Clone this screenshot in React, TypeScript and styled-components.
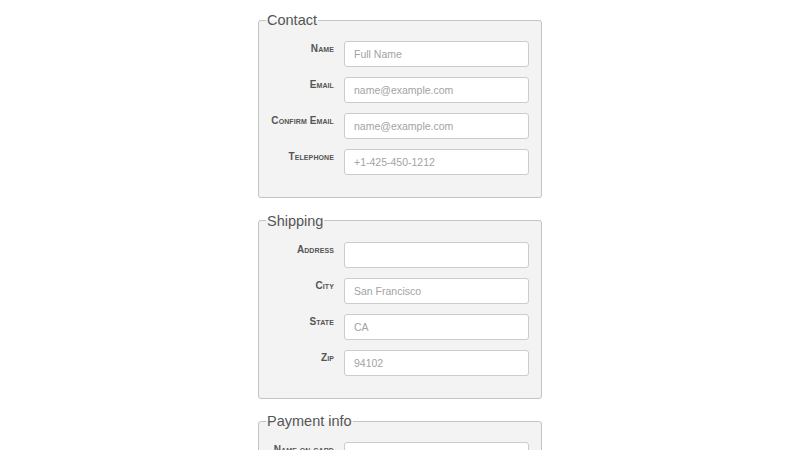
import React from 'react';
import styled, { createGlobalStyle } from 'styled-components';

const GlobalStyle = createGlobalStyle`
  html, body {
    margin: 0;
    padding: 0;
    background: #fff;
  }
  body {
    font-family: 'Liberation Sans', Arial, sans-serif;
  }
`;

const Page = styled.form`
  width: 284px;
  margin: 0 auto;
  padding-top: 11px;
`;

const Fieldset = styled.fieldset`
  margin: 0 0 13.5px;
  padding: 12px 12px 22px 7px;
  border: 1px solid #c4c4c4;
  border-radius: 3px;
  background: #f3f3f3;
  min-width: 0;
`;

const Legend = styled.legend`
  padding: 0 1px;
  font-size: 14.5px;
  line-height: 18px;
  color: #555;
`;

const Rows = styled.div`
  display: grid;
  grid-template-columns: 64px 185px;
  column-gap: 10px;
  row-gap: 10px;
  padding-left: 4px;
`;

const Label = styled.label`
  justify-self: end;
  padding-top: 2px;
  font-size: 10px;
  line-height: 12px;
  font-weight: bold;
  font-variant: small-caps;
  letter-spacing: 0.01em;
  color: #555;
  white-space: nowrap;
`;

const Input = styled.input`
  box-sizing: border-box;
  width: 185px;
  height: 26px;
  margin: 0;
  padding: 0 9px;
  border: 1px solid #ccc;
  border-radius: 3px;
  background: #fff;
  font-family: 'Liberation Sans', Arial, sans-serif;
  font-size: 10.5px;
  color: #333;

  &::placeholder {
    color: #a3a3a3;
  }
`;

type Field = { label: string; placeholder?: string };

const sections: { title: string; fields: Field[] }[] = [
  {
    title: 'Contact',
    fields: [
      { label: 'Name', placeholder: 'Full Name' },
      { label: 'Email', placeholder: 'name@example.com' },
      { label: 'Confirm Email', placeholder: 'name@example.com' },
      { label: 'Telephone', placeholder: '+1-425-450-1212' },
    ],
  },
  {
    title: 'Shipping',
    fields: [
      { label: 'Address' },
      { label: 'City', placeholder: 'San Francisco' },
      { label: 'State', placeholder: 'CA' },
      { label: 'Zip', placeholder: '94102' },
    ],
  },
  {
    title: 'Payment info',
    fields: [
      { label: 'Name on card' },
      { label: 'Card number' },
      { label: 'Expiration', placeholder: 'MM/YY' },
      { label: 'CVV' },
    ],
  },
];

function Section({ title, fields }: { title: string; fields: Field[] }) {
  return (
    <Fieldset>
      <Legend>{title}</Legend>
      <Rows>
        {fields.map((f) => (
          <React.Fragment key={f.label}>
            <Label>{f.label}</Label>
            <Input type="text" placeholder={f.placeholder} />
          </React.Fragment>
        ))}
      </Rows>
    </Fieldset>
  );
}

export default function App() {
  return (
    <>
      <GlobalStyle />
      <Page>
        {sections.map((s) => (
          <Section key={s.title} title={s.title} fields={s.fields} />
        ))}
      </Page>
    </>
  );
}
